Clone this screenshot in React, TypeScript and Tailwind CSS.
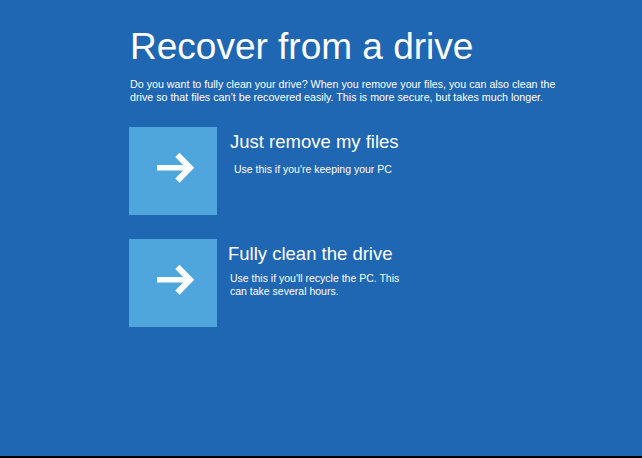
import React from 'react'

interface OptionTileProps {
  title: string
  lines: string[]
  titleClass: string
  bodyClass: string
}

function ArrowIcon() {
  return (
    <svg width="88" height="88" viewBox="0 0 88 88" aria-hidden="true">
      <rect x="28" y="38" width="29" height="5.5" fill="#ffffff" />
      <polyline
        points="50.5,30 61,40.75 50.5,51.5"
        fill="none"
        stroke="#ffffff"
        strokeWidth="6"
        strokeLinecap="square"
        strokeLinejoin="miter"
      />
    </svg>
  )
}

function OptionTile({ title, lines, titleClass, bodyClass }: OptionTileProps) {
  return (
    <div className="flex items-start">
      <div className="flex h-[88px] w-[88px] shrink-0 items-center justify-center bg-[#4ea6dc]">
        <ArrowIcon />
      </div>
      <div className="flex flex-col text-white">
        <div className={titleClass}>{title}</div>
        <div className={bodyClass}>
          {lines.map(line => (
            <div key={line}>{line}</div>
          ))}
        </div>
      </div>
    </div>
  )
}

export default function App() {
  return (
    <div
      className="flex h-[458px] w-[642px] flex-col overflow-hidden"
      style={{ fontFamily: '"Liberation Sans", Arial, sans-serif' }}
    >
      <div className="flex flex-1 flex-col bg-[#1f66b3] pl-[129px] pt-[28px]">
        <h1 className="ml-[1px] text-[37px] leading-[37px] text-white">Recover from a drive</h1>
        <p className="ml-[1px] mt-[13px] text-[10.7px] leading-[13.3px] text-white">
          Do you want to fully clean your drive? When you remove your files, you can also clean the
          <br />
          drive so that files can’t be recovered easily. This is more secure, but takes much longer.
        </p>
        <div className="mt-[22px] flex flex-col gap-[24px]">
          <OptionTile
            title="Just remove my files"
            lines={["Use this if you're keeping your PC"]}
            titleClass="ml-[13px] mt-[4px] text-[18.5px] leading-[22px]"
            bodyClass="ml-[17px] mt-[10px] text-[10.5px] leading-[13px]"
          />
          <OptionTile
            title="Fully clean the drive"
            lines={["Use this if you'll recycle the PC. This", 'can take several hours.']}
            titleClass="ml-[11px] mt-[4px] text-[18.5px] leading-[22px]"
            bodyClass="ml-[13px] mt-[7px] text-[10.5px] leading-[13px]"
          />
        </div>
      </div>
      <div className="h-[2px] bg-black" />
    </div>
  )
}
